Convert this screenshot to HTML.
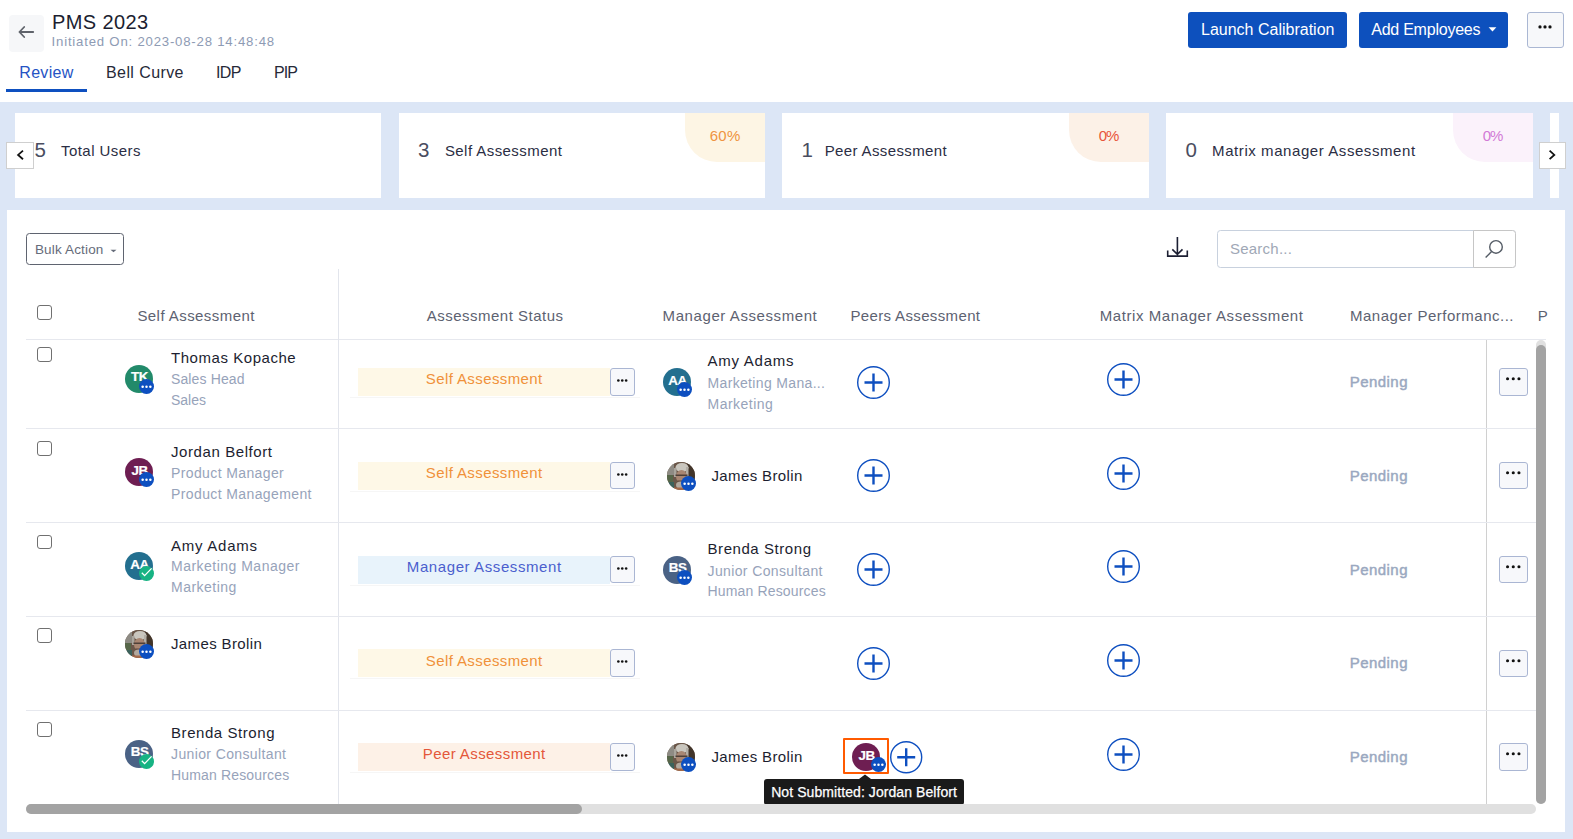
<!DOCTYPE html>
<html><head><meta charset="utf-8">
<style>
*{box-sizing:border-box;margin:0;padding:0}
html,body{width:1573px;height:839px;overflow:hidden;background:#fff;font-family:"Liberation Sans",sans-serif;position:relative}
.a{position:absolute}
.t{position:absolute;white-space:nowrap;line-height:1}
.av{width:28px;height:28px;border-radius:50%;color:#fff;font-weight:700;font-size:13.4px;line-height:28px;text-align:center;letter-spacing:-0.4px}
.av span{position:relative;left:0.6px;top:-1.2px;-webkit-text-stroke:0.2px #fff}
.dbtn{border:1px solid #aab6d3;background:#f7f8fb;border-radius:3px}
</style></head><body>
<div class="a" style="left:9px;top:15px;width:35px;height:37px;background:#f6f7f9;border-radius:4px"></div>
<svg class="a" width="35" height="37" style="left:9px;top:15px"><path d="M10.6 17H24.2M15.2 12L10.4 17L15.2 22" stroke="#5f636b" stroke-width="1.8" fill="none" stroke-linecap="round" stroke-linejoin="round"/></svg>
<div class="a" style="left:6px;top:89px;width:81px;height:3px;background:#0e50c0"></div>
<div class="a" style="left:1188px;top:12px;width:159px;height:36px;background:#0d50bd;border-radius:3px"></div>
<div class="a" style="left:1359px;top:12px;width:149px;height:36px;background:#0d50bd;border-radius:3px"></div>
<svg class="a" width="10" height="6" style="left:1488px;top:27px"><path d="M0.6 0.3H8.4L4.5 4.6Z" fill="#fff"/></svg>
<div class="a" style="left:1527px;top:12px;width:37px;height:36px;border:1px solid #aab7d3;background:#f7f8fa;border-radius:3px"></div>
<svg class="a" width="37" height="36" style="left:1527px;top:12px"><circle cx="13" cy="14.9" r="1.65" fill="#111"/><circle cx="18" cy="14.9" r="1.65" fill="#111"/><circle cx="23" cy="14.9" r="1.65" fill="#111"/></svg>
<div class="a" style="left:0px;top:102px;width:1573px;height:737px;background:#dce6f6"></div>
<div class="a" style="left:15px;top:112.5px;width:366px;height:85.5px;background:#fff"></div>
<div class="a" style="left:398.5px;top:112.5px;width:366.5px;height:85.5px;background:#fff"></div>
<div class="a" style="left:685.0px;top:112.5px;width:80px;height:49px;background:#fdf5e4;border-bottom-left-radius:32px"></div>
<div class="a" style="left:782px;top:112.5px;width:367px;height:85.5px;background:#fff"></div>
<div class="a" style="left:1069px;top:112.5px;width:80px;height:49px;background:#fcf1e7;border-bottom-left-radius:32px"></div>
<div class="a" style="left:1166px;top:112.5px;width:367px;height:85.5px;background:#fff"></div>
<div class="a" style="left:1453px;top:112.5px;width:80px;height:49px;background:#fbf2fb;border-bottom-left-radius:32px"></div>
<div class="a" style="left:1550px;top:112.5px;width:9px;height:85.5px;background:#fff"></div>
<div class="a" style="left:6px;top:142px;width:28px;height:27px;background:#fff;border:1px solid #cfcfcf"></div>
<svg class="a" width="28" height="27" style="left:6px;top:142px"><path d="M17 8.6L12.1 12.9L17 17.2" stroke="#111" stroke-width="1.8" fill="none"/></svg>
<div class="a" style="left:1539px;top:142px;width:26.5px;height:26.5px;background:#fff;border:1px solid #cfcfcf"></div>
<svg class="a" width="28" height="27" style="left:1539px;top:142px"><path d="M10.6 8.6L15.3 12.9L10.6 17.2" stroke="#111" stroke-width="1.8" fill="none"/></svg>
<div class="a" style="left:7px;top:209.5px;width:1558px;height:622.5px;background:#fff"></div>
<div class="a" style="left:26.3px;top:233.3px;width:97.5px;height:31.5px;border:1px solid #5f6470;border-radius:3.5px"></div>
<svg class="a" width="8" height="5" style="left:109.5px;top:249px"><path d="M0.5 0.8H6.5L3.5 3.2Z" fill="#666c7a"/></svg>
<svg class="a" width="30" height="30" style="left:1162px;top:232px"><path d="M15.4 5V22.4M10.3 17.4L15.4 22.4L20.5 17.4M5.7 18.4V24.1H25.3V18.4" stroke="#1c1f33" stroke-width="1.6" fill="none"/></svg>
<div class="a" style="left:1217.3px;top:230.3px;width:299px;height:37.3px;border:1px solid #c8d1de;border-radius:3.5px;background:#fff"></div>
<div class="a" style="left:1473.4px;top:230.3px;width:42.6px;height:37.3px;border:1px solid #c6c6c6;border-radius:0 3.5px 3.5px 0;background:#fff"></div>
<svg class="a" width="30" height="30" style="left:1481px;top:234px"><circle cx="15" cy="12.9" r="6.3" stroke="#555c66" stroke-width="1.4" fill="none"/><path d="M10.6 17.6L4.6 23.6" stroke="#555c66" stroke-width="1.4"/></svg>
<div class="a" style="left:37.2px;top:305.2px;width:14.7px;height:14.7px;border:1.5px solid #707070;border-radius:3px;background:#fff"></div>
<div class="a" style="left:26px;top:339px;width:1520px;height:1px;background:#e6e8ee"></div>
<div class="a" style="left:338px;top:269px;width:1px;height:535px;background:#e2e5ec"></div>
<div class="a" style="left:1486px;top:340px;width:1px;height:464px;background:#d0d0d0"></div>
<div class="a" style="left:26px;top:428px;width:1510px;height:1px;background:#e6e8ee"></div>
<div class="a" style="left:37.2px;top:347.2px;width:14.7px;height:14.7px;border:1.5px solid #707070;border-radius:3px;background:#fff"></div>
<div class="a av" style="left:125px;top:364.6px;background:#228a6a"><span>TK</span></div>
<div class="a" style="left:139.0px;top:378.6px;width:15px;height:15px;border-radius:50%;background:#0d4fc0"><svg width="15" height="15" style="position:absolute;left:0;top:0"><circle cx="3.65" cy="7.7" r="1.25" fill="#fff"/><circle cx="7.5" cy="7.7" r="1.25" fill="#fff"/><circle cx="11.35" cy="7.7" r="1.25" fill="#fff"/></svg></div>
<div class="a" style="left:350px;top:397.0px;width:290px;height:1.2px;background:#f6f6f6"></div>
<div class="a" style="left:358px;top:368.0px;width:252px;height:28px;background:#fef8e7"></div>
<div class="a dbtn" style="left:610.2px;top:368.0px;width:24.5px;height:27.6px"><svg width="22.5" height="25.6" style="position:absolute;left:0;top:0"><circle cx="7.35" cy="11.5" r="1.3" fill="#111"/><circle cx="11.25" cy="11.5" r="1.3" fill="#111"/><circle cx="15.15" cy="11.5" r="1.3" fill="#111"/></svg></div>
<div class="a av" style="left:663px;top:368.0px;background:#236f8f"><span>AA</span></div>
<div class="a" style="left:677.0px;top:382.0px;width:15px;height:15px;border-radius:50%;background:#0d4fc0"><svg width="15" height="15" style="position:absolute;left:0;top:0"><circle cx="3.65" cy="7.7" r="1.25" fill="#fff"/><circle cx="7.5" cy="7.7" r="1.25" fill="#fff"/><circle cx="11.35" cy="7.7" r="1.25" fill="#fff"/></svg></div>
<svg class="a" width="35" height="35" style="left:856.0px;top:364.5px"><circle cx="17.5" cy="17.5" r="15.8" stroke="#0e4fc0" stroke-width="1.4" fill="none"/><path d="M8.5 17.5H26.5M17.5 8.5V26.5" stroke="#0e4fc0" stroke-width="2.4"/></svg>
<svg class="a" width="35" height="35" style="left:1106.0px;top:361.9px"><circle cx="17.5" cy="17.5" r="15.8" stroke="#0e4fc0" stroke-width="1.4" fill="none"/><path d="M8.5 17.5H26.5M17.5 8.5V26.5" stroke="#0e4fc0" stroke-width="2.4"/></svg>
<div class="a dbtn" style="left:1499.2px;top:368.4px;width:28.5px;height:27.3px"><svg width="26.5" height="25.3" style="position:absolute;left:0;top:0"><circle cx="7.55" cy="9.8" r="1.55" fill="#111"/><circle cx="13.25" cy="9.8" r="1.55" fill="#111"/><circle cx="18.95" cy="9.8" r="1.55" fill="#111"/></svg></div>
<div class="a" style="left:26px;top:522px;width:1510px;height:1px;background:#e6e8ee"></div>
<div class="a" style="left:37.2px;top:440.95px;width:14.7px;height:14.7px;border:1.5px solid #707070;border-radius:3px;background:#fff"></div>
<div class="a av" style="left:125px;top:458.35px;background:#6e1e52"><span>JB</span></div>
<div class="a" style="left:139.0px;top:472.35px;width:15px;height:15px;border-radius:50%;background:#0d4fc0"><svg width="15" height="15" style="position:absolute;left:0;top:0"><circle cx="3.65" cy="7.7" r="1.25" fill="#fff"/><circle cx="7.5" cy="7.7" r="1.25" fill="#fff"/><circle cx="11.35" cy="7.7" r="1.25" fill="#fff"/></svg></div>
<div class="a" style="left:350px;top:490.75px;width:290px;height:1.2px;background:#f6f6f6"></div>
<div class="a" style="left:358px;top:461.75px;width:252px;height:28px;background:#fef8e7"></div>
<div class="a dbtn" style="left:610.2px;top:461.75px;width:24.5px;height:27.6px"><svg width="22.5" height="25.6" style="position:absolute;left:0;top:0"><circle cx="7.35" cy="11.5" r="1.3" fill="#111"/><circle cx="11.25" cy="11.5" r="1.3" fill="#111"/><circle cx="15.15" cy="11.5" r="1.3" fill="#111"/></svg></div>
<div class="a" style="left:666.8px;top:461.55px;width:28px;height:28px;border-radius:50%;overflow:hidden;background:#6b5a4a"><svg width="28" height="28" style="position:absolute;left:0;top:0"><defs><filter id="bl68084755" x="-20%" y="-20%" width="140%" height="140%"><feGaussianBlur stdDeviation="0.75"/></filter></defs><g filter="url(#bl68084755)">
<rect x="-3" y="-3" width="34" height="34" fill="#6a5748"/>
<rect x="-3" y="-3" width="10" height="16" fill="#8e8b84"/>
<rect x="-3" y="13" width="9" height="7" fill="#56664a"/>
<rect x="-3" y="20" width="10" height="10" fill="#3b625c"/>
<rect x="20" y="-3" width="11" height="34" fill="#43342a"/>
<ellipse cx="15" cy="5.5" rx="6.5" ry="4.5" fill="#c9c6be"/>
<rect x="7" y="6" width="2.5" height="9" fill="#a9a59d"/>
<rect x="19" y="5" width="2.5" height="10" fill="#b3afa7"/>
<ellipse cx="14.5" cy="14.5" rx="5.5" ry="6.5" fill="#a88672"/>
<rect x="8.5" y="12.5" width="12" height="1.5" fill="#4e3f38"/>
<rect x="10.5" y="18.5" width="7.5" height="2" fill="#5e473b"/>
<ellipse cx="13.5" cy="23" rx="4.5" ry="3.5" fill="#b1a89e"/>
<rect x="7" y="25.5" width="14" height="5" fill="#a5694a"/>
</g></svg></div>
<div class="a" style="left:681.0999999999999px;top:475.55px;width:15px;height:15px;border-radius:50%;background:#0d4fc0"><svg width="15" height="15" style="position:absolute;left:0;top:0"><circle cx="3.65" cy="7.7" r="1.25" fill="#fff"/><circle cx="7.5" cy="7.7" r="1.25" fill="#fff"/><circle cx="11.35" cy="7.7" r="1.25" fill="#fff"/></svg></div>
<svg class="a" width="35" height="35" style="left:856.0px;top:458.25px"><circle cx="17.5" cy="17.5" r="15.8" stroke="#0e4fc0" stroke-width="1.4" fill="none"/><path d="M8.5 17.5H26.5M17.5 8.5V26.5" stroke="#0e4fc0" stroke-width="2.4"/></svg>
<svg class="a" width="35" height="35" style="left:1106.0px;top:455.65px"><circle cx="17.5" cy="17.5" r="15.8" stroke="#0e4fc0" stroke-width="1.4" fill="none"/><path d="M8.5 17.5H26.5M17.5 8.5V26.5" stroke="#0e4fc0" stroke-width="2.4"/></svg>
<div class="a dbtn" style="left:1499.2px;top:462.15px;width:28.5px;height:27.3px"><svg width="26.5" height="25.3" style="position:absolute;left:0;top:0"><circle cx="7.55" cy="9.8" r="1.55" fill="#111"/><circle cx="13.25" cy="9.8" r="1.55" fill="#111"/><circle cx="18.95" cy="9.8" r="1.55" fill="#111"/></svg></div>
<div class="a" style="left:26px;top:616px;width:1510px;height:1px;background:#e6e8ee"></div>
<div class="a" style="left:37.2px;top:534.7px;width:14.7px;height:14.7px;border:1.5px solid #707070;border-radius:3px;background:#fff"></div>
<div class="a av" style="left:125px;top:552.1px;background:#236f8f"><span>AA</span></div>
<div class="a" style="left:139.0px;top:566.1px;width:15px;height:15px;border-radius:50%;background:#17b383"><svg width="15" height="15" style="position:absolute;left:0;top:0"><path d="M2.8 6.8L5.6 9.6L12.6 2.4" stroke="#fff" stroke-width="1.3" fill="none"/></svg></div>
<div class="a" style="left:350px;top:584.5px;width:290px;height:1.2px;background:#f6f6f6"></div>
<div class="a" style="left:358px;top:555.5px;width:252px;height:28px;background:#e8f3fb"></div>
<div class="a dbtn" style="left:610.2px;top:555.5px;width:24.5px;height:27.6px"><svg width="22.5" height="25.6" style="position:absolute;left:0;top:0"><circle cx="7.35" cy="11.5" r="1.3" fill="#111"/><circle cx="11.25" cy="11.5" r="1.3" fill="#111"/><circle cx="15.15" cy="11.5" r="1.3" fill="#111"/></svg></div>
<div class="a av" style="left:663px;top:555.5px;background:#4a6285"><span>BS</span></div>
<div class="a" style="left:677.0px;top:569.5px;width:15px;height:15px;border-radius:50%;background:#0d4fc0"><svg width="15" height="15" style="position:absolute;left:0;top:0"><circle cx="3.65" cy="7.7" r="1.25" fill="#fff"/><circle cx="7.5" cy="7.7" r="1.25" fill="#fff"/><circle cx="11.35" cy="7.7" r="1.25" fill="#fff"/></svg></div>
<svg class="a" width="35" height="35" style="left:856.0px;top:552.0px"><circle cx="17.5" cy="17.5" r="15.8" stroke="#0e4fc0" stroke-width="1.4" fill="none"/><path d="M8.5 17.5H26.5M17.5 8.5V26.5" stroke="#0e4fc0" stroke-width="2.4"/></svg>
<svg class="a" width="35" height="35" style="left:1106.0px;top:549.4px"><circle cx="17.5" cy="17.5" r="15.8" stroke="#0e4fc0" stroke-width="1.4" fill="none"/><path d="M8.5 17.5H26.5M17.5 8.5V26.5" stroke="#0e4fc0" stroke-width="2.4"/></svg>
<div class="a dbtn" style="left:1499.2px;top:555.9px;width:28.5px;height:27.3px"><svg width="26.5" height="25.3" style="position:absolute;left:0;top:0"><circle cx="7.55" cy="9.8" r="1.55" fill="#111"/><circle cx="13.25" cy="9.8" r="1.55" fill="#111"/><circle cx="18.95" cy="9.8" r="1.55" fill="#111"/></svg></div>
<div class="a" style="left:26px;top:710px;width:1510px;height:1px;background:#e6e8ee"></div>
<div class="a" style="left:37.2px;top:628.45px;width:14.7px;height:14.7px;border:1.5px solid #707070;border-radius:3px;background:#fff"></div>
<div class="a" style="left:125px;top:629.8px;width:28px;height:28px;border-radius:50%;overflow:hidden;background:#6b5a4a"><svg width="28" height="28" style="position:absolute;left:0;top:0"><defs><filter id="bl13906438" x="-20%" y="-20%" width="140%" height="140%"><feGaussianBlur stdDeviation="0.75"/></filter></defs><g filter="url(#bl13906438)">
<rect x="-3" y="-3" width="34" height="34" fill="#6a5748"/>
<rect x="-3" y="-3" width="10" height="16" fill="#8e8b84"/>
<rect x="-3" y="13" width="9" height="7" fill="#56664a"/>
<rect x="-3" y="20" width="10" height="10" fill="#3b625c"/>
<rect x="20" y="-3" width="11" height="34" fill="#43342a"/>
<ellipse cx="15" cy="5.5" rx="6.5" ry="4.5" fill="#c9c6be"/>
<rect x="7" y="6" width="2.5" height="9" fill="#a9a59d"/>
<rect x="19" y="5" width="2.5" height="10" fill="#b3afa7"/>
<ellipse cx="14.5" cy="14.5" rx="5.5" ry="6.5" fill="#a88672"/>
<rect x="8.5" y="12.5" width="12" height="1.5" fill="#4e3f38"/>
<rect x="10.5" y="18.5" width="7.5" height="2" fill="#5e473b"/>
<ellipse cx="13.5" cy="23" rx="4.5" ry="3.5" fill="#b1a89e"/>
<rect x="7" y="25.5" width="14" height="5" fill="#a5694a"/>
</g></svg></div>
<div class="a" style="left:139.3px;top:643.8px;width:15px;height:15px;border-radius:50%;background:#0d4fc0"><svg width="15" height="15" style="position:absolute;left:0;top:0"><circle cx="3.65" cy="7.7" r="1.25" fill="#fff"/><circle cx="7.5" cy="7.7" r="1.25" fill="#fff"/><circle cx="11.35" cy="7.7" r="1.25" fill="#fff"/></svg></div>
<div class="a" style="left:350px;top:678.25px;width:290px;height:1.2px;background:#f6f6f6"></div>
<div class="a" style="left:358px;top:649.25px;width:252px;height:28px;background:#fef8e7"></div>
<div class="a dbtn" style="left:610.2px;top:649.25px;width:24.5px;height:27.6px"><svg width="22.5" height="25.6" style="position:absolute;left:0;top:0"><circle cx="7.35" cy="11.5" r="1.3" fill="#111"/><circle cx="11.25" cy="11.5" r="1.3" fill="#111"/><circle cx="15.15" cy="11.5" r="1.3" fill="#111"/></svg></div>
<svg class="a" width="35" height="35" style="left:856.0px;top:645.75px"><circle cx="17.5" cy="17.5" r="15.8" stroke="#0e4fc0" stroke-width="1.4" fill="none"/><path d="M8.5 17.5H26.5M17.5 8.5V26.5" stroke="#0e4fc0" stroke-width="2.4"/></svg>
<svg class="a" width="35" height="35" style="left:1106.0px;top:643.15px"><circle cx="17.5" cy="17.5" r="15.8" stroke="#0e4fc0" stroke-width="1.4" fill="none"/><path d="M8.5 17.5H26.5M17.5 8.5V26.5" stroke="#0e4fc0" stroke-width="2.4"/></svg>
<div class="a dbtn" style="left:1499.2px;top:649.65px;width:28.5px;height:27.3px"><svg width="26.5" height="25.3" style="position:absolute;left:0;top:0"><circle cx="7.55" cy="9.8" r="1.55" fill="#111"/><circle cx="13.25" cy="9.8" r="1.55" fill="#111"/><circle cx="18.95" cy="9.8" r="1.55" fill="#111"/></svg></div>
<div class="a" style="left:37.2px;top:722.2px;width:14.7px;height:14.7px;border:1.5px solid #707070;border-radius:3px;background:#fff"></div>
<div class="a av" style="left:125px;top:739.6px;background:#4a6285"><span>BS</span></div>
<div class="a" style="left:139.0px;top:753.6px;width:15px;height:15px;border-radius:50%;background:#17b383"><svg width="15" height="15" style="position:absolute;left:0;top:0"><path d="M2.8 6.8L5.6 9.6L12.6 2.4" stroke="#fff" stroke-width="1.3" fill="none"/></svg></div>
<div class="a" style="left:350px;top:772.0px;width:290px;height:1.2px;background:#f6f6f6"></div>
<div class="a" style="left:358px;top:743.0px;width:252px;height:28px;background:#fdf1e7"></div>
<div class="a dbtn" style="left:610.2px;top:743.0px;width:24.5px;height:27.6px"><svg width="22.5" height="25.6" style="position:absolute;left:0;top:0"><circle cx="7.35" cy="11.5" r="1.3" fill="#111"/><circle cx="11.25" cy="11.5" r="1.3" fill="#111"/><circle cx="15.15" cy="11.5" r="1.3" fill="#111"/></svg></div>
<div class="a" style="left:666.8px;top:742.8px;width:28px;height:28px;border-radius:50%;overflow:hidden;background:#6b5a4a"><svg width="28" height="28" style="position:absolute;left:0;top:0"><defs><filter id="bl68087568" x="-20%" y="-20%" width="140%" height="140%"><feGaussianBlur stdDeviation="0.75"/></filter></defs><g filter="url(#bl68087568)">
<rect x="-3" y="-3" width="34" height="34" fill="#6a5748"/>
<rect x="-3" y="-3" width="10" height="16" fill="#8e8b84"/>
<rect x="-3" y="13" width="9" height="7" fill="#56664a"/>
<rect x="-3" y="20" width="10" height="10" fill="#3b625c"/>
<rect x="20" y="-3" width="11" height="34" fill="#43342a"/>
<ellipse cx="15" cy="5.5" rx="6.5" ry="4.5" fill="#c9c6be"/>
<rect x="7" y="6" width="2.5" height="9" fill="#a9a59d"/>
<rect x="19" y="5" width="2.5" height="10" fill="#b3afa7"/>
<ellipse cx="14.5" cy="14.5" rx="5.5" ry="6.5" fill="#a88672"/>
<rect x="8.5" y="12.5" width="12" height="1.5" fill="#4e3f38"/>
<rect x="10.5" y="18.5" width="7.5" height="2" fill="#5e473b"/>
<ellipse cx="13.5" cy="23" rx="4.5" ry="3.5" fill="#b1a89e"/>
<rect x="7" y="25.5" width="14" height="5" fill="#a5694a"/>
</g></svg></div>
<div class="a" style="left:681.0999999999999px;top:756.8px;width:15px;height:15px;border-radius:50%;background:#0d4fc0"><svg width="15" height="15" style="position:absolute;left:0;top:0"><circle cx="3.65" cy="7.7" r="1.25" fill="#fff"/><circle cx="7.5" cy="7.7" r="1.25" fill="#fff"/><circle cx="11.35" cy="7.7" r="1.25" fill="#fff"/></svg></div>
<div class="a" style="left:843px;top:737.7px;width:46.3px;height:36px;border:2.4px solid #ff5a00;border-radius:1px"></div>
<div class="a av" style="left:852px;top:742.9px;background:#6e1e52"><span>JB</span></div>
<div class="a" style="left:871.0px;top:756.6999999999999px;width:15px;height:15px;border-radius:50%;background:#0d4fc0"><svg width="15" height="15" style="position:absolute;left:0;top:0"><circle cx="3.65" cy="7.7" r="1.25" fill="#fff"/><circle cx="7.5" cy="7.7" r="1.25" fill="#fff"/><circle cx="11.35" cy="7.7" r="1.25" fill="#fff"/></svg></div>
<svg class="a" width="34.4" height="34.4" style="left:888.5999999999999px;top:740.1999999999999px"><circle cx="17.2" cy="17.2" r="15.5" stroke="#0e4fc0" stroke-width="1.4" fill="none"/><path d="M8.2 17.2H26.2M17.2 8.2V26.2" stroke="#0e4fc0" stroke-width="2.4"/></svg>
<svg class="a" width="35" height="35" style="left:1106.0px;top:736.9px"><circle cx="17.5" cy="17.5" r="15.8" stroke="#0e4fc0" stroke-width="1.4" fill="none"/><path d="M8.5 17.5H26.5M17.5 8.5V26.5" stroke="#0e4fc0" stroke-width="2.4"/></svg>
<div class="a dbtn" style="left:1499.2px;top:743.4px;width:28.5px;height:27.3px"><svg width="26.5" height="25.3" style="position:absolute;left:0;top:0"><circle cx="7.55" cy="9.8" r="1.55" fill="#111"/><circle cx="13.25" cy="9.8" r="1.55" fill="#111"/><circle cx="18.95" cy="9.8" r="1.55" fill="#111"/></svg></div>
<svg class="a" width="14" height="6" style="left:857.6px;top:774px"><path d="M1 5L7 0.6L13 5Z" fill="#1a1a1a"/></svg>
<div class="a" style="left:764px;top:778.8px;width:200px;height:26px;background:#1a1a1a;border-radius:3px"></div>
<div class="a" style="left:26px;top:804px;width:1510px;height:10px;background:#e0e0e0;border-radius:5px"></div>
<div class="a" style="left:26px;top:804px;width:556px;height:10px;background:#a3a3a3;border-radius:5px"></div>
<div class="a" style="left:1536px;top:340px;width:10px;height:464px;background:#e0e0e0;border-radius:5px"></div>
<div class="a" style="left:1536px;top:345px;width:10px;height:459px;background:#a3a3a3;border-radius:5px"></div>
<div class="t" style="left:52.00px;top:11.67px;font-size:20px;color:#1c1e30;letter-spacing:0.373px;">PMS 2023</div>
<div class="t" style="left:51.60px;top:35.33px;font-size:13.2px;color:#8e9bb4;letter-spacing:0.790px;">Initiated On: 2023-08-28 14:48:48</div>
<div class="t" style="left:19.30px;top:64.96px;font-size:16px;color:#2553c4;letter-spacing:0.306px;">Review</div>
<div class="t" style="left:106.00px;top:64.96px;font-size:16px;color:#262938;letter-spacing:0.410px;">Bell Curve</div>
<div class="t" style="left:216.00px;top:64.96px;font-size:16px;color:#262938;letter-spacing:-0.586px;">IDP</div>
<div class="t" style="left:274.00px;top:64.96px;font-size:16px;color:#262938;letter-spacing:-0.898px;">PIP</div>
<div class="t" style="left:1201.00px;top:21.76px;font-size:16px;color:#fff;">Launch Calibration</div>
<div class="t" style="left:1371.20px;top:21.76px;font-size:16px;color:#fff;letter-spacing:-0.230px;">Add Employees</div>
<div class="t" style="left:34.60px;top:140.15px;font-size:20.5px;color:#4a4d60;">5</div>
<div class="t" style="left:61.00px;top:143.30px;font-size:15px;color:#2b2e44;letter-spacing:0.447px;">Total Users</div>
<div class="t" style="left:709.75px;top:128.10px;font-size:15px;color:#ef9440;letter-spacing:0.234px;">60%</div>
<div class="t" style="left:418.10px;top:140.15px;font-size:20.5px;color:#4a4d60;">3</div>
<div class="t" style="left:444.90px;top:143.30px;font-size:15px;color:#2b2e44;letter-spacing:0.436px;">Self Assessment</div>
<div class="t" style="left:1098.75px;top:128.10px;font-size:15px;color:#e8553a;letter-spacing:-1.188px;">0%</div>
<div class="t" style="left:801.60px;top:140.15px;font-size:20.5px;color:#4a4d60;">1</div>
<div class="t" style="left:824.70px;top:143.30px;font-size:15px;color:#2b2e44;letter-spacing:0.377px;">Peer Assessment</div>
<div class="t" style="left:1482.75px;top:128.10px;font-size:15px;color:#d27ad6;letter-spacing:-1.188px;">0%</div>
<div class="t" style="left:1185.60px;top:140.15px;font-size:20.5px;color:#4a4d60;">0</div>
<div class="t" style="left:1212.10px;top:143.30px;font-size:15px;color:#2b2e44;letter-spacing:0.573px;">Matrix manager Assessment</div>
<div class="t" style="left:34.90px;top:242.97px;font-size:13.5px;color:#666c7a;letter-spacing:0.170px;">Bulk Action</div>
<div class="t" style="left:1229.90px;top:241.20px;font-size:15px;color:#a0a8b6;letter-spacing:0.246px;">Search...</div>
<div class="t" style="left:137.40px;top:308.20px;font-size:15px;color:#5d6271;letter-spacing:0.436px;">Self Assessment</div>
<div class="t" style="left:426.70px;top:308.20px;font-size:15px;color:#5d6271;letter-spacing:0.494px;">Assessment Status</div>
<div class="t" style="left:662.60px;top:308.20px;font-size:15px;color:#5d6271;letter-spacing:0.585px;">Manager Assessment</div>
<div class="t" style="left:850.40px;top:308.20px;font-size:15px;color:#5d6271;letter-spacing:0.359px;">Peers Assessment</div>
<div class="t" style="left:1099.70px;top:308.20px;font-size:15px;color:#5d6271;letter-spacing:0.585px;">Matrix Manager Assessment</div>
<div class="t" style="left:1350.00px;top:308.20px;font-size:15px;color:#5d6271;letter-spacing:0.505px;">Manager Performanc...</div>
<div class="t" style="left:1537.70px;top:308.20px;font-size:15px;color:#5d6271;">P</div>
<div class="t" style="left:171.00px;top:350.00px;font-size:15px;color:#1c1e30;letter-spacing:0.548px;">Thomas Kopache</div>
<div class="t" style="left:171.00px;top:371.95px;font-size:14px;color:#97a3ba;letter-spacing:0.123px;">Sales Head</div>
<div class="t" style="left:171.00px;top:392.95px;font-size:14px;color:#97a3ba;">Sales</div>
<div class="t" style="left:425.75px;top:371.30px;font-size:15px;color:#f0913a;letter-spacing:0.401px;">Self Assessment</div>
<div class="t" style="left:707.50px;top:353.10px;font-size:15px;color:#1c1e30;letter-spacing:0.746px;">Amy Adams</div>
<div class="t" style="left:707.50px;top:376.05px;font-size:14px;color:#97a3ba;letter-spacing:0.340px;">Marketing Mana...</div>
<div class="t" style="left:707.50px;top:396.55px;font-size:14px;color:#97a3ba;letter-spacing:0.491px;">Marketing</div>
<div class="t" style="left:1349.80px;top:374.20px;font-size:15px;color:#9aa8c0;letter-spacing:0.440px;-webkit-text-stroke:0.45px #9aa8c0;">Pending</div>
<div class="t" style="left:171.00px;top:443.75px;font-size:15px;color:#1c1e30;letter-spacing:0.585px;">Jordan Belfort</div>
<div class="t" style="left:171.00px;top:465.70px;font-size:14px;color:#97a3ba;letter-spacing:0.385px;">Product Manager</div>
<div class="t" style="left:171.00px;top:486.70px;font-size:14px;color:#97a3ba;letter-spacing:0.391px;">Product Management</div>
<div class="t" style="left:425.75px;top:465.05px;font-size:15px;color:#f0913a;letter-spacing:0.401px;">Self Assessment</div>
<div class="t" style="left:711.40px;top:467.75px;font-size:15px;color:#1c1e30;letter-spacing:0.391px;">James Brolin</div>
<div class="t" style="left:1349.80px;top:467.95px;font-size:15px;color:#9aa8c0;letter-spacing:0.440px;-webkit-text-stroke:0.45px #9aa8c0;">Pending</div>
<div class="t" style="left:171.00px;top:537.50px;font-size:15px;color:#1c1e30;letter-spacing:0.746px;">Amy Adams</div>
<div class="t" style="left:171.00px;top:559.45px;font-size:14px;color:#97a3ba;letter-spacing:0.486px;">Marketing Manager</div>
<div class="t" style="left:171.00px;top:580.45px;font-size:14px;color:#97a3ba;letter-spacing:0.491px;">Marketing</div>
<div class="t" style="left:406.85px;top:558.80px;font-size:15px;color:#4b5fce;letter-spacing:0.591px;">Manager Assessment</div>
<div class="t" style="left:707.50px;top:540.60px;font-size:15px;color:#1c1e30;letter-spacing:0.564px;">Brenda Strong</div>
<div class="t" style="left:707.50px;top:563.55px;font-size:14px;color:#97a3ba;letter-spacing:0.378px;">Junior Consultant</div>
<div class="t" style="left:707.50px;top:584.05px;font-size:14px;color:#97a3ba;letter-spacing:0.162px;">Human Resources</div>
<div class="t" style="left:1349.80px;top:561.70px;font-size:15px;color:#9aa8c0;letter-spacing:0.440px;-webkit-text-stroke:0.45px #9aa8c0;">Pending</div>
<div class="t" style="left:170.90px;top:635.60px;font-size:15px;color:#1c1e30;letter-spacing:0.391px;">James Brolin</div>
<div class="t" style="left:425.75px;top:652.55px;font-size:15px;color:#f0913a;letter-spacing:0.401px;">Self Assessment</div>
<div class="t" style="left:1349.80px;top:655.45px;font-size:15px;color:#9aa8c0;letter-spacing:0.440px;-webkit-text-stroke:0.45px #9aa8c0;">Pending</div>
<div class="t" style="left:171.00px;top:725.00px;font-size:15px;color:#1c1e30;letter-spacing:0.564px;">Brenda Strong</div>
<div class="t" style="left:171.00px;top:746.95px;font-size:14px;color:#97a3ba;letter-spacing:0.378px;">Junior Consultant</div>
<div class="t" style="left:171.00px;top:767.95px;font-size:14px;color:#97a3ba;letter-spacing:0.162px;">Human Resources</div>
<div class="t" style="left:422.75px;top:746.30px;font-size:15px;color:#e4573a;letter-spacing:0.413px;">Peer Assessment</div>
<div class="t" style="left:711.40px;top:749.00px;font-size:15px;color:#1c1e30;letter-spacing:0.391px;">James Brolin</div>
<div class="t" style="left:1349.80px;top:749.20px;font-size:15px;color:#9aa8c0;letter-spacing:0.440px;-webkit-text-stroke:0.45px #9aa8c0;">Pending</div>
<div class="t" style="left:771.20px;top:785.05px;font-size:14px;color:#fff;letter-spacing:0.077px;-webkit-text-stroke:0.25px #fff;">Not Submitted: Jordan Belfort</div>
</body></html>
